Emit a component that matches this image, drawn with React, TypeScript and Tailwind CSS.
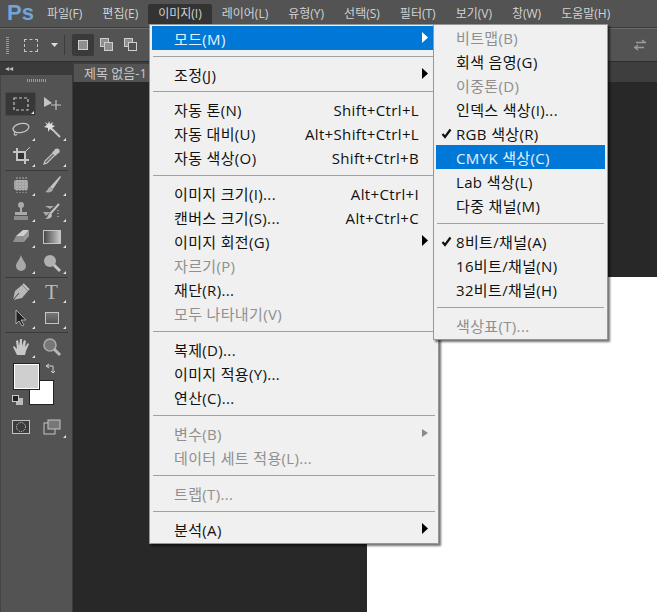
import type { ReactNode } from "react"

const font = { fontFamily: '"Open Sans", "Noto Sans CJK KR", sans-serif' }

type Row = { label: string; shortcut?: string; disabled?: boolean; arrow?: boolean; active?: boolean; check?: boolean }

const imageMenu: (Row | "sep" | "sep2")[] = [
  { label: "모드(M)", arrow: true, active: true },
  "sep",
  { label: "조정(J)", arrow: true },
  "sep2",
  { label: "자동 톤(N)", shortcut: "Shift+Ctrl+L" },
  { label: "자동 대비(U)", shortcut: "Alt+Shift+Ctrl+L" },
  { label: "자동 색상(O)", shortcut: "Shift+Ctrl+B" },
  "sep",
  { label: "이미지 크기(I)...", shortcut: "Alt+Ctrl+I" },
  { label: "캔버스 크기(S)...", shortcut: "Alt+Ctrl+C" },
  { label: "이미지 회전(G)", arrow: true },
  { label: "자르기(P)", disabled: true },
  { label: "재단(R)..." },
  { label: "모두 나타내기(V)", disabled: true },
  "sep",
  { label: "복제(D)..." },
  { label: "이미지 적용(Y)..." },
  { label: "연산(C)..." },
  "sep",
  { label: "변수(B)", disabled: true, arrow: true },
  { label: "데이터 세트 적용(L)...", disabled: true },
  "sep",
  { label: "트랩(T)...", disabled: true },
  "sep",
  { label: "분석(A)", arrow: true },
]

const modeMenu: (Row | "sep" | "sep2")[] = [
  { label: "비트맵(B)", disabled: true },
  { label: "회색 음영(G)" },
  { label: "이중톤(D)", disabled: true },
  { label: "인덱스 색상(I)..." },
  { label: "RGB 색상(R)", check: true },
  { label: "CMYK 색상(C)", active: true },
  { label: "Lab 색상(L)" },
  { label: "다중 채널(M)" },
  "sep",
  { label: "8비트/채널(A)", check: true },
  { label: "16비트/채널(N)" },
  { label: "32비트/채널(H)" },
  "sep",
  { label: "색상표(T)...", disabled: true },
]

const topMenu = ["파일(F)", "편집(E)", "이미지(I)", "레이어(L)", "유형(Y)", "선택(S)", "필터(T)", "보기(V)", "창(W)", "도움말(H)"]

function MenuRows({ rows, indent }: { rows: (Row | "sep" | "sep2")[]; indent: string }) {
  return (
    <>
      {rows.map((r, i) =>
        r === "sep" || r === "sep2" ? (
          <div key={i} className={`${r === "sep" ? "h-3" : "h-[11px]"} flex items-center px-[3px]`}>
            <div className="h-px w-full bg-[#a2a2a2]" />
          </div>
        ) : (
          <div
            key={i}
            className={`h-6 flex items-center mx-[2px] pr-[8px] pt-[2px] text-[15px] tracking-[0.35px] ${indent} relative ${
              r.active ? "bg-[#0078d7] text-[#e6f2fb]" : r.disabled ? "text-[#8f8f8f]" : "text-[#111]"
            }`}
          >
            {r.check && (
              <svg className="absolute left-[5px] top-[7px]" width="11" height="11" viewBox="0 0 11 11">
                <path d="M1.5 6 L4 9 L9.5 1.5" fill="none" stroke="#111" strokeWidth="2.2" />
              </svg>
            )}
            <span className="whitespace-nowrap">{r.label}</span>
            {r.shortcut && <span className="ml-auto mr-[9px] whitespace-nowrap">{r.shortcut}</span>}
            {r.arrow && (
              <svg
                className={r.disabled ? "absolute right-[8px] top-[8px]" : "absolute right-[8px] top-[6px]"}
                width="6"
                height={r.disabled ? 8 : 11}
                viewBox="0 0 6 11"
                preserveAspectRatio="none"
              >
                <path d="M0 0 L6 5.5 L0 11Z" fill={r.active ? "#fff" : r.disabled ? "#8a8a8a" : "#000"} />
              </svg>
            )}
          </div>
        )
      )}
    </>
  )
}

function Tool({ children, corner = true, active = false }: { children: ReactNode; corner?: boolean; active?: boolean }) {
  return (
    <div
      className={`relative w-[31px] h-[24px] flex items-center justify-center rounded-[2px] ${
        active ? "bg-[#383838] border border-[#484848]" : ""
      }`}
    >
      {children}
      {corner && <div className="absolute right-[1px] bottom-[1px] w-0 h-0 border-l-[3px] border-l-transparent border-b-[3px] border-b-[#e4e4e4]" />}
    </div>
  )
}

const S = ({ children }: { children: ReactNode }) => (
  <svg width="20" height="20" viewBox="0 0 20 20" fill="none">
    {children}
  </svg>
)

const c = "#c4c4c4"

function ToolRow({ children }: { children: ReactNode }) {
  return <div className="flex justify-between pl-[4px] pr-[5px] h-[26px] items-center">{children}</div>
}

function ToolSep() {
  return <div className="mx-[4px] my-[1px] h-px bg-[#3a3a3a]" />
}

function OverlapSquares({ front }: { front: string }) {
  return (
    <div className="relative w-[14px] h-[14px]">
      <div className="absolute left-0 top-0 w-[9px] h-[9px] bg-[#8f8f8f] border border-[#cfcfcf]" />
      <div className={`absolute left-[4px] top-[4px] w-[9px] h-[9px] border border-[#cfcfcf] ${front}`} />
    </div>
  )
}

function Toolbar() {
  return (
    <div className="w-[72px] h-full flex flex-col">
      <div className="h-[13px] bg-[#3a3a3a] text-[8px] leading-[12px] text-[#bdbdbd] pl-[5px]">◂◂</div>
      <div className="flex-1 bg-[#535353] border-l border-[#444] pt-[4px]">
        <div className="h-[5px] flex justify-center mb-[7px]">
          <div className="w-[20px] h-[3px] bg-[repeating-linear-gradient(90deg,#999_0,#999_1px,transparent_1px,transparent_2px)]" />
        </div>
        <ToolRow>
          <Tool active>
            <S><rect x="3" y="4" width="14" height="12" stroke={c} strokeWidth="1.2" strokeDasharray="3 2" /></S>
          </Tool>
          <Tool corner={false}>
            <S>
              <path d="M2 3 L10 9 L2 13Z" fill={c} />
              <path d="M14 6 V16 M9 11 H19" stroke={c} strokeWidth="1.2" />
            </S>
          </Tool>
        </ToolRow>
        <ToolRow>
          <Tool>
            <S>
              <ellipse cx="10" cy="8" rx="8" ry="4.5" transform="rotate(-12 10 8)" stroke={c} strokeWidth="1.3" />
              <path d="M4 12 C2 15 5 16 6 14" stroke={c} strokeWidth="1.2" />
            </S>
          </Tool>
          <Tool>
            <S>
              <path d="M10 9 L18 17" stroke={c} strokeWidth="2" />
              <path d="M7 1 L8 4 L11 2 L10 5 L13 6 L10 8 L11 11 L8 9 L6 12 L6 8 L2 7 L5 5 L3 2 L6 4Z" fill="#ddd" />
            </S>
          </Tool>
        </ToolRow>
        <ToolRow>
          <Tool>
            <S>
              <path d="M6 2 V14 H18 M2 6 H14 V18" stroke={c} strokeWidth="2" />
              <path d="M7 13 L19 1" stroke={c} strokeWidth="1" />
              <rect x="7" y="7" width="6" height="6" fill="#333" />
            </S>
          </Tool>
          <Tool>
            <S>
              <path d="M2 18 L3 15 L11 7 L13 9 L5 17Z" stroke={c} strokeWidth="1.2" fill="#666" />
              <path d="M10 6 L14 10 L15 8 L17 7 C19 5 17 1 13 3 L12 5Z" fill={c} />
            </S>
          </Tool>
        </ToolRow>
        <ToolSep />
        <ToolRow>
          <Tool>
            <S>
              <rect x="3" y="5" width="14" height="10" rx="2" fill="#a2a2a2" />
              <path d="M6 2 V18 M9 2 V18 M12 2 V18 M15 2 V18" stroke={c} strokeWidth="0.8" strokeDasharray="2 1" />
            </S>
          </Tool>
          <Tool>
            <S>
              <path d="M8 12 L18 1 L19 2 L11 14Z" fill={c} />
              <path d="M3 17 C6 16 6 12 8 12 L11 14 C11 17 7 18 3 17Z" fill="#aaa" />
            </S>
          </Tool>
        </ToolRow>
        <ToolRow>
          <Tool>
            <S>
              <circle cx="10" cy="4" r="3" fill="#aaa" />
              <path d="M9 6 H11 V11 H16 V14 H4 V11 H9Z" fill="#aaa" />
              <path d="M3 16 H17 M3 18 H17" stroke={c} strokeWidth="1" />
            </S>
          </Tool>
          <Tool>
            <S>
              <path d="M3 5 H12 L8 8Z M1 11 H8 L4 15Z" fill="#aaa" />
              <path d="M8 13 L17 3" stroke={c} strokeWidth="2" />
              <path d="M3 18 C6 17 6 13 8 12 L10 14 C10 17 7 18 3 18Z" fill="#bbb" />
              <path d="M16 9 V17" stroke="#ddd" strokeDasharray="1 2" />
            </S>
          </Tool>
        </ToolRow>
        <ToolRow>
          <Tool>
            <S>
              <path d="M5 9 L12 3 H18 L13 9Z" fill="#cfcfcf" />
              <path d="M13 9 L18 3 V9 L13 15Z" fill="#9a9a9a" />
              <path d="M5 9 H13 V15 H2Z" fill="#8f8f8f" />
            </S>
          </Tool>
          <Tool>
            <svg width="18" height="14" viewBox="0 0 18 14">
              <defs>
                <linearGradient id="gr">
                  <stop offset="0" stopColor="#444" />
                  <stop offset="1" stopColor="#ccc" />
                </linearGradient>
              </defs>
              <rect x="0.5" y="0.5" width="17" height="13" fill="url(#gr)" stroke="#c4c4c4" />
            </svg>
          </Tool>
        </ToolRow>
        <ToolRow>
          <Tool>
            <S><path d="M10 2 C11 6 15 10 15 13 A5 5 0 0 1 5 13 C5 10 9 6 10 2Z" fill="#a8a8a8" /></S>
          </Tool>
          <Tool>
            <S>
              <circle cx="8" cy="8" r="6" fill="#b0b0b0" />
              <path d="M12 12 L18 18" stroke={c} strokeWidth="3" />
            </S>
          </Tool>
        </ToolRow>
        <ToolSep />
        <ToolRow>
          <Tool>
            <S>
              <path d="M2 18 L4 9 L11 3 L17 9 L11 16Z" fill="#b8b8b8" />
              <path d="M2 18 L8 11" stroke="#444" strokeWidth="1" />
              <path d="M12 2 L18 8" stroke={c} strokeWidth="2" />
            </S>
          </Tool>
          <Tool>
            <span className="text-[21px] leading-none text-[#b8b8b8] font-['Liberation_Serif',serif]">T</span>
          </Tool>
        </ToolRow>
        <ToolRow>
          <Tool>
            <S>
              <path d="M5 2 V16 L8 13 L11 18 L13 17 L10 12 H15Z" fill="#222" stroke={c} strokeWidth="0.8" />
            </S>
          </Tool>
          <Tool>
            <div className="w-[14px] h-[12px] border border-[#c4c4c4] bg-gradient-to-b from-[#777] to-[#555]" />
          </Tool>
        </ToolRow>
        <ToolSep />
        <ToolRow>
          <Tool>
            <S>
              <path d="M6 18 L2 10 L3 9 L6 12 L5 4 L7 3 L8 9 L9 2 L11 2 L11 9 L13 3 L15 4 L14 10 L17 6 L18 7 L15 14 L14 18Z" fill="#c8c8c8" />
            </S>
          </Tool>
          <Tool corner={false}>
            <S>
              <circle cx="8" cy="8" r="6" fill="#777" stroke="#aaa" strokeWidth="1.6" />
              <path d="M12 12 L18 18" stroke="#b8b8b8" strokeWidth="3" />
            </S>
          </Tool>
        </ToolRow>
        <div className="relative h-[50px]">
          <svg className="absolute left-[44px] top-[3px]" width="11" height="11" viewBox="0 0 11 11" fill="none">
            <path d="M1 3 L4 1 M1 3 L4 5 M1 3 H8 V10 M6 8 L8 10 L10 8" stroke="#cfcfcf" />
          </svg>
          <div className="absolute left-[28px] top-[20px] w-[25px] h-[25px] bg-white border border-[#222]" />
          <div className="absolute left-[13px] top-[4px] w-[25px] h-[25px] bg-[#cfcfcf] border border-white outline outline-1 outline-[#222]" />
          <div className="absolute left-[15px] top-[38px] w-[7px] h-[7px] bg-[#bbb]" />
          <div className="absolute left-[11px] top-[35px] w-[7px] h-[7px] bg-[#222] border border-[#ccc]" />
        </div>
        <div className="flex justify-between pl-[4px] pr-[5px] h-[26px] items-center mt-[4px]">
          <Tool corner={false}>
            <svg width="18" height="14" viewBox="0 0 18 14" fill="none">
              <rect x="0.5" y="0.5" width="17" height="13" stroke="#c4c4c4" fill="#3c3c3c" />
              <circle cx="9" cy="7" r="4.5" stroke="#ddd" strokeDasharray="1 1" />
            </svg>
          </Tool>
          <Tool>
            <S>
              <rect x="2" y="6" width="11" height="11" stroke="#c4c4c4" />
              <rect x="6" y="3" width="12" height="9" fill="#777" stroke="#c4c4c4" />
            </S>
          </Tool>
        </div>
      </div>
    </div>
  )
}

export default function App() {
  return (
    <div className="relative w-[657px] h-[612px] overflow-hidden bg-[#282828] flex flex-col" style={font}>
      {/* menu bar */}
      <div className="h-[28px] bg-[#535353] border-b border-[#3a3a3a] flex items-center shrink-0">
        <span className="w-[37px] pl-[7px] text-[22px] font-bold leading-none text-[#6ea6d8] font-['Liberation_Sans',sans-serif] -mt-[2px]">Ps</span>
        <div className="flex text-[12px] text-[#d2d2d2]">
          {topMenu.map((m) => (
            <span
              key={m}
              className={`whitespace-nowrap px-[10px] h-[20px] leading-[20px] rounded-t-[2px] ${
                m === "이미지(I)" ? "bg-[#333]" : ""
              }`}
            >
              {m}
            </span>
          ))}
        </div>
      </div>
      {/* options bar */}
      <div className="h-[34px] bg-[#535353] border-t border-[#6a6a6a] border-b border-b-[#2e2e2e] flex items-center pl-[6px] shrink-0">
        <div className="w-[3px] h-[18px] bg-[repeating-linear-gradient(0deg,#999_0,#999_1px,transparent_1px,transparent_2px)]" />
        <div className="ml-[15px] w-[14px] h-[13px] border border-dashed border-[#c4c4c4]" />
        <svg className="ml-[13px]" width="7" height="4" viewBox="0 0 7 4"><path d="M0 0 H7 L3.5 4Z" fill="#ddd" /></svg>
        <div className="ml-[6px] w-px h-[20px] bg-[#3c3c3c]" />
        <div className="ml-[7px] w-[22px] h-[22px] bg-[#3a3a3a] rounded-[2px] flex items-center justify-center">
          <div className="w-[10px] h-[10px] bg-[#8f8f8f] border border-[#cfcfcf]" />
        </div>
        <div className="ml-[6px]"><OverlapSquares front="bg-[#8f8f8f]" /></div>
        <div className="ml-[10px]"><OverlapSquares front="bg-[#535353]" /></div>
        <div className="ml-[11px]"><OverlapSquares front="bg-[#8f8f8f]" /></div>
        <div className="ml-auto mr-[41px] w-[10px] h-[24px] bg-[#484848]" />
        <svg className="mr-[10px]" width="14" height="12" viewBox="0 0 14 12" fill="none" stroke="#9a9a9a" strokeWidth="1.6">
          <path d="M3 3.5 H13 M9 1 L12 3.5 M1 8.5 H11 M5 6 L2 8.5 M5 11 L2 8.5" />
        </svg>
      </div>
      {/* body */}
      <div className="flex-1 flex min-h-0">
        <Toolbar />
        <div className="w-px bg-[#3a3a3a]" />
        <div className="flex-1 flex flex-col min-w-0">
          <div className="h-[20px] bg-[#3e3e3e] flex items-end shrink-0 pl-[1px]">
            <div className="w-[90px] h-[18px] bg-[#535353] pl-[10px] text-[13px] leading-[18px] text-[#c8c8c8] whitespace-nowrap overflow-hidden">제목 없음-1</div>
          </div>
          <div className="flex-1 flex min-h-0">
            <div className="w-[294px] bg-[#282828]" />
            <div className="flex-1 flex flex-col">
              <div className="h-[195px] bg-[#282828]" />
              <div className="flex-1 bg-white" />
            </div>
          </div>
        </div>
      </div>
      {/* open menus */}
      <div className="absolute left-[149px] top-[24px] w-[290px] pt-[1px] pb-[2px] bg-[#f0f0f0] border border-[#979797] shadow-[2px_2px_2px_rgba(0,0,0,0.55)]">
        <MenuRows rows={imageMenu} indent="pl-[22px]" />
      </div>
      <div className="absolute left-[433px] top-[24px] w-[175px] pb-[2px] bg-[#f0f0f0] border border-[#979797] shadow-[2px_2px_2px_rgba(0,0,0,0.55)]">
        <MenuRows rows={modeMenu} indent="pl-[20px]" />
      </div>
    </div>
  )
}
